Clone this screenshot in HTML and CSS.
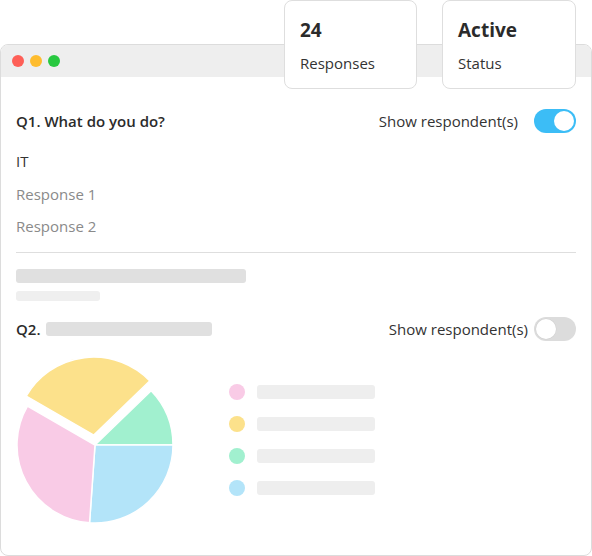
FILE: index.html
```html
<!DOCTYPE html>
<html>
<head>
<meta charset="utf-8">
<link rel="stylesheet" href="styles.css">
</head>
<body>
<div class="stats">
  <div class="card card-a">
    <div class="card-value">24</div>
    <div class="card-label">Responses</div>
  </div>
  <div class="card card-b">
    <div class="card-value">Active</div>
    <div class="card-label">Status</div>
  </div>
</div>
<div class="window">
  <div class="titlebar">
    <span class="dot red"></span>
    <span class="dot yellow"></span>
    <span class="dot green"></span>
  </div>
  <div class="content">
    <div class="q-row q1">
      <div class="q-title">Q1. What do you do?</div>
      <div class="toggle-wrap wide">
        <span class="toggle-label">Show respondent(s)</span>
        <span class="toggle on"><span class="knob"></span></span>
      </div>
    </div>
    <div class="answers">
      <div class="answer main">IT</div>
      <div class="answer">Response 1</div>
      <div class="answer">Response 2</div>
    </div>
    <div class="divider"></div>
    <div class="skel skel-a"></div>
    <div class="skel skel-b"></div>
    <div class="q-row q2">
      <div class="q-title q2-title">Q2. <span class="skel skel-c"></span></div>
      <div class="toggle-wrap">
        <span class="toggle-label">Show respondent(s)</span>
        <span class="toggle off"><span class="knob"></span></span>
      </div>
    </div>
    <div class="chart">
      <svg class="pie" width="160" height="170" viewBox="0 0 160 170">
        <path d="M79,90 L135.11,35.82 A78,78 0 0 1 157,90 Z" fill="#a1f0cf" stroke="#fff" stroke-width="1.5"/>
        <path d="M79,90 L157,90 A78,78 0 0 1 73.56,167.81 Z" fill="#b3e4f9" stroke="#fff" stroke-width="1.5"/>
        <path d="M79,90 L73.56,167.81 A78,78 0 0 1 11.45,51 Z" fill="#f9cbe6" stroke="#fff" stroke-width="1.5"/>
        <path d="M77.78,80.07 L10.23,41.07 A78,78 0 0 1 133.89,25.89 Z" fill="#fce18b" stroke="#fff" stroke-width="1.5"/>
      </svg>
      <div class="legend">
        <div class="legend-row"><span class="ldot pink"></span><span class="lbar"></span></div>
        <div class="legend-row"><span class="ldot amber"></span><span class="lbar"></span></div>
        <div class="legend-row"><span class="ldot mint"></span><span class="lbar"></span></div>
        <div class="legend-row"><span class="ldot sky"></span><span class="lbar"></span></div>
      </div>
    </div>
  </div>
</div>
</body>
</html>
```

FILE: styles.css
```css
* { box-sizing: border-box; }
html, body {
  margin: 0;
  padding: 0;
  background: #fff;
}
body {
  width: 592px;
  height: 556px;
  overflow: hidden;
  font-family: "Open Sans", "Noto Sans", sans-serif;
  color: #333;
}
.stats {
  position: relative;
  z-index: 2;
  display: flex;
  justify-content: flex-end;
  gap: 25px;
  padding-right: 16px;
  height: 89px;
  margin-bottom: -45px;
}
.card {
  height: 89px;
  background: #fff;
  border: 1px solid #dedede;
  border-radius: 8px;
  padding: 16px 15px 0;
}
.card-a { width: 133px; }
.card-b { width: 134px; }
.card-value {
  font-size: 19px;
  font-weight: 700;
  line-height: 26px;
  color: #2b2b2b;
}
.card-label {
  font-size: 15px;
  line-height: 20px;
  margin-top: 10px;
  color: #333;
}
.window {
  position: relative;
  z-index: 1;
  width: 592px;
  height: 512px;
  border: 1px solid #dcdcdc;
  border-radius: 8px;
  overflow: hidden;
  background: #fff;
}
.titlebar {
  height: 32px;
  background: #eeeeee;
  display: flex;
  align-items: center;
  gap: 6px;
  padding-left: 11px;
}
.dot {
  width: 12px;
  height: 12px;
  border-radius: 50%;
}
.dot.red { background: #fe5f57; }
.dot.yellow { background: #febc2e; }
.dot.green { background: #28c840; }
.content {
  padding: 32px 15px 0;
}
.q-row {
  display: flex;
  justify-content: space-between;
  align-items: center;
  height: 24px;
}
.q-title {
  font-size: 15px;
  font-weight: 600;
  color: #2b2b2b;
}
.q2-title {
  display: flex;
  align-items: center;
  gap: 5px;
}
.toggle-wrap {
  display: flex;
  align-items: center;
  gap: 6px;
}
.toggle-wrap.wide { gap: 16px; }
.toggle-label {
  font-size: 15px;
  color: #333;
}
.toggle {
  width: 42px;
  height: 24px;
  border-radius: 12px;
  display: flex;
  align-items: center;
  padding: 2px;
}
.toggle.on {
  background: #3cbdf6;
  justify-content: flex-end;
}
.toggle.off {
  background: #dcdcdc;
  justify-content: flex-start;
}
.knob {
  width: 20px;
  height: 20px;
  border-radius: 50%;
  background: #fff;
}
.toggle.off .knob {
  box-shadow: 0 0 0 0.5px #d0d0d0;
}
.answers {
  margin-top: 12px;
}
.answer {
  font-size: 15px;
  line-height: 32.5px;
  color: #8a8a8a;
}
.answer.main { color: #333; }
.divider {
  margin-top: 9px;
  height: 1px;
  background: #dedede;
}
.skel {
  display: block;
  border-radius: 3px;
}
.skel-a {
  margin-top: 16px;
  width: 230px;
  height: 14px;
  background: #e0e0e0;
}
.skel-b {
  margin-top: 8px;
  width: 84px;
  height: 10px;
  background: #efefef;
}
.q2 {
  margin-top: 16px;
}
.skel-c {
  display: inline-block;
  width: 166px;
  height: 14px;
  background: #e0e0e0;
}
.chart {
  display: flex;
  align-items: flex-start;
  margin-top: 14px;
}
.pie {
  display: block;
}
.legend {
  margin-left: 53px;
  margin-top: 29px;
  display: flex;
  flex-direction: column;
  gap: 16px;
}
.legend-row {
  display: flex;
  align-items: center;
  gap: 12px;
  height: 16px;
}
.ldot {
  width: 16px;
  height: 16px;
  border-radius: 50%;
}
.ldot.pink { background: #f9cbe6; }
.ldot.amber { background: #fce18b; }
.ldot.mint { background: #a1f0cf; }
.ldot.sky { background: #b3e4f9; }
.lbar {
  width: 118px;
  height: 14px;
  border-radius: 3px;
  background: #eeeeee;
}
```
